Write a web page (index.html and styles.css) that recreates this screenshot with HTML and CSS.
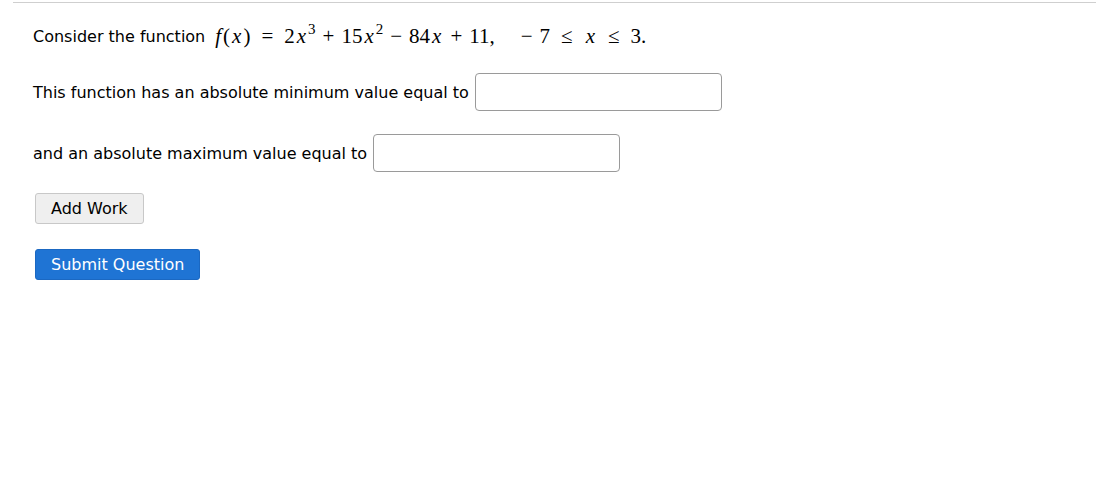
FILE: index.html
```html
<!DOCTYPE html>
<html>
<head>
<meta charset="utf-8">
<link rel="stylesheet" href="styles.css">
</head>
<body>
<div class="rule"></div>
<div class="question">
  <p class="line first">Consider the function
    <span class="math"><i class="fn">f</i>(<i>x</i>)<span class="rel">=</span>2<i>x</i><sup>3</sup><span class="bin">+</span>15<i>x</i><sup>2</sup><span class="bin">−</span>84<i>x</i><span class="bin">+</span>11,<span class="gap"></span><span class="bin">−</span>7<span class="rel">≤</span><i>x</i><span class="rel">≤</span>3.</span>
  </p>
  <p class="line">This function has an absolute minimum value equal to <input class="answer" type="text"></p>
  <p class="line">and an absolute maximum value equal to <input class="answer" type="text"></p>
  <div class="actions">
    <button class="btn btn-work" type="button">Add Work</button>
    <button class="btn btn-submit" type="button">Submit Question</button>
  </div>
</div>
</body>
</html>
```
FILE: styles.css
```css
html, body {
  margin: 0;
  padding: 0;
  background: #fff;
}
body {
  font-family: "DejaVu Sans", sans-serif;
  font-size: 16px;
  color: #000;
}
.rule {
  margin: 2px 0 0 13px;
  height: 1px;
  background: #cfcfcf;
}
.question {
  padding: 0 0 0 33px;
}
.line {
  margin: 0;
  display: flex;
  align-items: center;
  gap: 6px;
}
.line.first {
  height: 24px;
  margin-top: 21px;
  margin-bottom: 25px;
}
.line + .line {
  margin-top: 23px;
}
.math {
  font-family: "Liberation Serif", serif;
  font-size: 21px;
  white-space: nowrap;
  margin-left: 4px;
}
.math i {
  font-style: italic;
  margin: 0 2px;
}
.math i.fn {
  margin: 0 2px 0 0;
}
.math sup {
  font-size: 15px;
  vertical-align: 9px;
  line-height: 0;
}
.rel {
  margin: 0 11px;
}
.bin {
  margin: 0 7px;
}
.gap {
  display: inline-block;
  width: 19px;
}
.answer {
  box-sizing: border-box;
  width: 247px;
  height: 38px;
  border: 1px solid #9a9a9a;
  border-radius: 4px;
  margin: 0;
  padding: 0 6px;
  font-size: 16px;
}
.actions {
  display: flex;
  flex-direction: column;
  align-items: flex-start;
  gap: 25px;
  margin-top: 21px;
  margin-left: 2px;
}
.btn {
  font-family: "DejaVu Sans", sans-serif;
  font-size: 16px;
  height: 31px;
  border-radius: 3px;
  padding: 0 15px;
  margin: 0;
}
.btn-work {
  background: #efefef;
  border: 1px solid #c8c8c8;
  color: #000;
}
.btn-submit {
  background: #1f74d4;
  border: 1px solid #1b68c2;
  color: #fff;
}
```
